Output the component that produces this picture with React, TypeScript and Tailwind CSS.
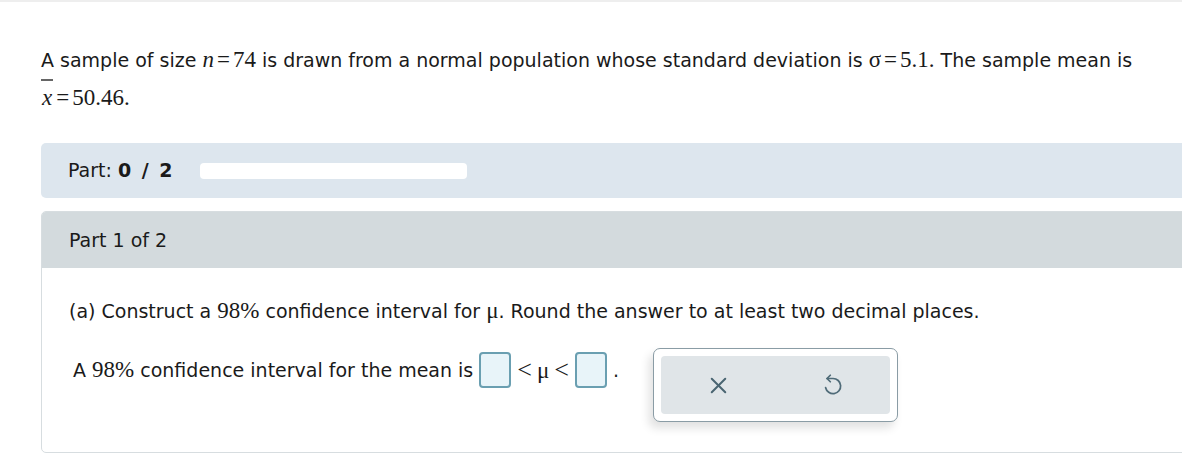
import { X } from 'lucide-react'

const sans = { fontFamily: '"DejaVu Sans", Verdana, sans-serif' }

function M({ children, italic }: { children: React.ReactNode; italic?: boolean }) {
  return (
    <span className={`font-['Liberation_Serif',serif] text-[23px] ${italic ? 'italic' : ''}`}>{children}</span>
  )
}

function Eq() {
  return <span className="font-['Liberation_Serif',serif] text-[23px] px-[3px]">=</span>
}

function AnswerBox() {
  return <span className="inline-block w-[32px] h-[36px] align-middle rounded-[4px] border-2 border-[#6a9fb1] bg-[#e8f4f9]" />
}

function ResetIcon() {
  return (
    <svg width="26" height="26" viewBox="0 0 24 24" fill="none" stroke="#4f6b78" strokeWidth={1.6} strokeLinecap="round" strokeLinejoin="round">
      <path d="M9.5 3 L6.5 6 L9.5 9" />
      <path d="M6.5 6 H12 A7 7 0 1 1 5.2 14.5" />
    </svg>
  )
}

export default function App() {
  return (
    <div className="w-[1182px] h-[456px] overflow-hidden bg-white text-[#1a1a1a] text-[19px]" style={sans}>
      <div className="h-[2px] bg-[#eeeeee]" />

      {/* Question stem */}
      <div className="pl-[41px] pt-[39px] leading-[38px]">
        <div className="whitespace-nowrap">
          A sample of size <M italic>n</M><Eq /><M>74</M> is drawn from a normal population whose standard deviation is <M>σ</M><Eq /><M>5.1.</M> The sample mean is
        </div>
        <div>
          <span className="font-['Liberation_Serif',serif] text-[23px] italic inline-block border-t-2 border-[#666] leading-[22px] pt-[6px] px-[1px]">x</span>
          <Eq />
          <M>50.46.</M>
        </div>
      </div>

      <div className="ml-[41px] w-[1160px] mt-[26px]">
        {/* Progress band */}
        <div className="h-[55px] rounded-[5px] bg-[#dde6ee] flex items-center pl-[27px]">
          <span>Part: <b className="[word-spacing:4px]">0 / 2</b></span>
          <div className="ml-[27px] w-[267px] h-[16px] rounded-[4px] bg-white" />
        </div>

        {/* Part card */}
        <div className="mt-[13px] rounded-[5px] border border-[#d7dde0] overflow-hidden">
          <div className="h-[56px] bg-[#d3dadd] flex items-center pl-[27px]">Part 1 of 2</div>
          <div className="pl-[27px] pt-[28px] pb-[30px]">
            <div className="leading-[30px]">
              (a) Construct a <M>98%</M> confidence interval for <M>μ</M>. Round the answer to at least two decimal places.
            </div>
            <div className="mt-[22px] flex items-start">
              <div className="pl-[4px] pt-[4px] flex items-center gap-[6px]">
                <span>A <M>98%</M> confidence interval for the mean is</span>
                <AnswerBox />
                <span className="font-['Liberation_Serif',serif] text-[26px] leading-none">
                  &lt;<span className="px-[5px] text-[23px]">μ</span>&lt;
                </span>
                <AnswerBox />
                <span>.</span>
              </div>
              <div className="ml-[34px] w-[245px] h-[74px] rounded-[7px] border border-[#8a9ca5] bg-white p-[7px] shadow-[-4px_6px_10px_rgba(0,0,0,0.12)]">
                <div className="h-full rounded-[4px] bg-[#e0e5e8] flex items-center justify-around">
                  <X size={27} strokeWidth={1.8} color="#4a6572" />
                  <ResetIcon />
                </div>
              </div>
            </div>
          </div>
        </div>
      </div>
    </div>
  )
}
